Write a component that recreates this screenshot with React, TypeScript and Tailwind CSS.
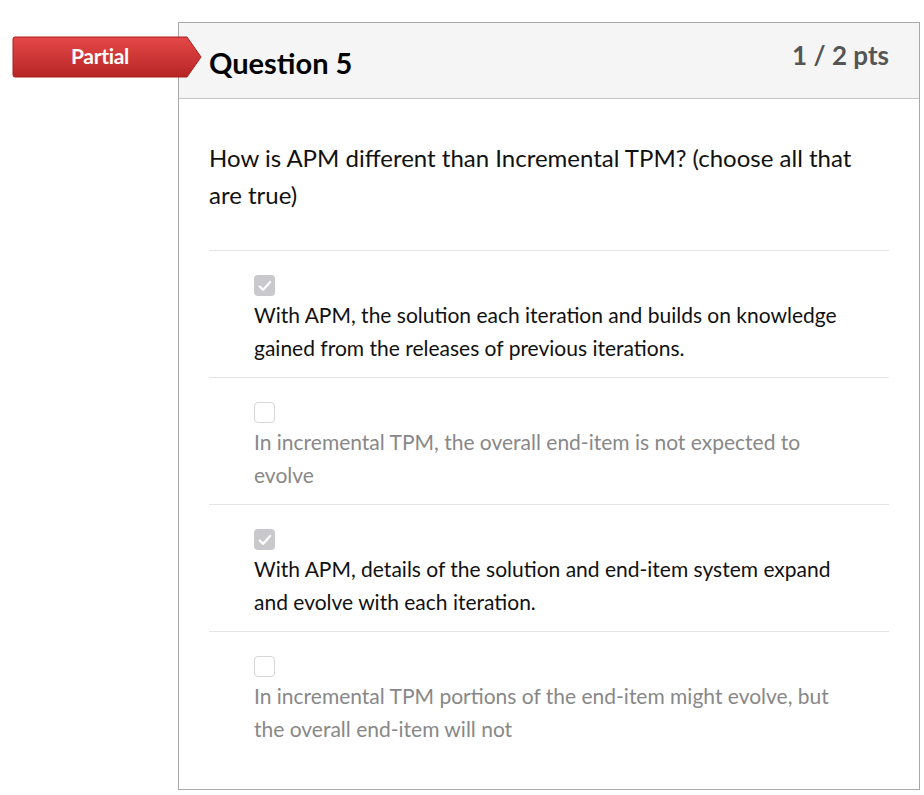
import React from "react";

interface Answer {
    text: string;
    checked: boolean;
}

const answers: Answer[] = [
    {
        text: "With APM, the solution each iteration and builds on knowledge gained from the releases of previous iterations.",
        checked: true,
    },
    {
        text: "In incremental TPM, the overall end-item is not expected to evolve",
        checked: false,
    },
    {
        text: "With APM, details of the solution and end-item system expand and evolve with each iteration.",
        checked: true,
    },
    {
        text: "In incremental TPM portions of the end-item might evolve, but the overall end-item will not",
        checked: false,
    },
];

function Checkbox({ checked }: { checked: boolean }) {
    if (checked) {
        return (
            <div className="w-[21px] h-[21px] rounded-[4px] bg-[#c8c8cd] flex items-center justify-center">
                <svg width="16" height="16" viewBox="0 0 16 16" fill="none">
                    <path d="M2.8 8.6 L6.2 11.8 L13.2 4" stroke="#fff" strokeWidth="2.3" strokeLinecap="round" strokeLinejoin="round" />
                </svg>
            </div>
        );
    }
    return <div className="w-[21px] h-[21px] rounded-[4px] border border-[#d6d6da] bg-white" />;
}

function PartialBadge() {
    return (
        <div className="absolute left-[-167px] top-[13px] w-[190px] h-[42px]">
            <svg width="190" height="42" viewBox="0 0 190 42" className="absolute inset-0">
                <defs>
                    <linearGradient id="bg" x1="0" y1="0" x2="0" y2="1">
                        <stop offset="0" stopColor="#e54848" />
                        <stop offset="1" stopColor="#b72525" />
                    </linearGradient>
                </defs>
                <path d="M3 1 H175 L189 21 L175 41 H3 Q1 41 1 39 V3 Q1 1 3 1 Z" fill="url(#bg)" stroke="#a91f1f" strokeWidth="1" />
            </svg>
            <div className="relative w-[176px] h-[40px] flex items-center justify-center text-white font-bold text-[21px] tracking-[-0.3px]">
                Partial
            </div>
        </div>
    );
}

export default function App() {
    return (
        <div className="min-h-screen bg-white pt-[22px]" style={{ fontFamily: "Lato, 'Open Sans', sans-serif" }}>
            <div className="relative ml-[178px] w-[742px] h-[768px] border border-[#a8a8a8]">
                <PartialBadge />
                <div className="h-[76px] bg-[#f5f5f5] border-b border-[#c4c4c4] flex justify-between pl-[30px] pr-[30px]">
                    <h2 className="text-[29px] font-bold text-black pt-[21px] leading-[38px]">Question 5</h2>
                    <div className="text-[26px] font-bold text-[#555] pt-[15px] leading-[34px]">1 / 2 pts</div>
                </div>
                <div className="px-[30px] pt-[40px]">
                    <p className="text-[24px] leading-[37px] text-[#111]">
                        How is APM different than Incremental TPM? (choose all that are true)
                    </p>
                    <div className="mt-[37px] border-t border-[#e4e4e4]">
                        {answers.map((a, i) => (
                            <div
                                key={i}
                                className={`pl-[45px] pt-[24px] pb-[13px] ${i < answers.length - 1 ? "border-b border-[#e4e4e4]" : ""}`}
                            >
                                <Checkbox checked={a.checked} />
                                <p className={`mt-[2px] text-[21px] leading-[33px] pr-[40px] ${a.checked ? "text-[#111]" : "text-[#888]"}`}>
                                    {a.text}
                                </p>
                            </div>
                        ))}
                    </div>
                </div>
            </div>
        </div>
    );
}
